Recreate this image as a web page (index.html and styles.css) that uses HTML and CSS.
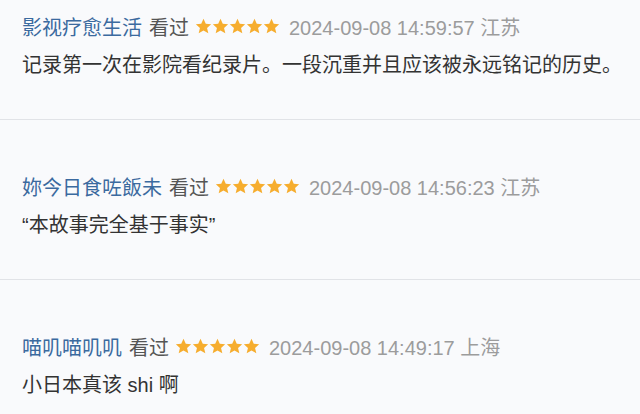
FILE: index.html
```html
<!DOCTYPE html>
<html lang="zh-CN">
<head>
    <meta charset="UTF-8">
    <meta name="viewport" content="width=device-width, initial-scale=1.0">
    <title>短评</title>
    <link rel="stylesheet" href="styles.css">
</head>
<body>

    <svg width="0" height="0" class="defs">
        <symbol id="star" viewBox="0 0 24 24">
            <path d="M12 1.2l3.2 7 7.6.7-5.8 5.1 1.8 7.6L12 17.7l-6.8 3.9 1.8-7.6-5.8-5.1 7.6-.7z" fill="#f6ad2e"/>
        </symbol>
    </svg>

    <div class="comments">
        <!-- Comment 1 -->
        <div class="comment first">
            <div class="comment-head">
                <a class="user">影视疗愈生活</a>
                <span class="status">看过</span>
                <span class="stars">
                    <svg><use href="#star"/></svg><svg><use href="#star"/></svg><svg><use href="#star"/></svg><svg><use href="#star"/></svg><svg><use href="#star"/></svg>
                </span>
                <span class="time">2024-09-08 14:59:57 江苏</span>
            </div>
            <p class="comment-body">记录第一次在影院看纪录片。一段沉重并且应该被永远铭记的历史。</p>
        </div>

        <!-- Comment 2 -->
        <div class="comment">
            <div class="comment-head">
                <a class="user">妳今日食咗飯未</a>
                <span class="status">看过</span>
                <span class="stars">
                    <svg><use href="#star"/></svg><svg><use href="#star"/></svg><svg><use href="#star"/></svg><svg><use href="#star"/></svg><svg><use href="#star"/></svg>
                </span>
                <span class="time">2024-09-08 14:56:23 江苏</span>
            </div>
            <p class="comment-body">“本故事完全基于事实”</p>
        </div>

        <!-- Comment 3 -->
        <div class="comment">
            <div class="comment-head">
                <a class="user">喵叽喵叽叽</a>
                <span class="status">看过</span>
                <span class="stars">
                    <svg><use href="#star"/></svg><svg><use href="#star"/></svg><svg><use href="#star"/></svg><svg><use href="#star"/></svg><svg><use href="#star"/></svg>
                </span>
                <span class="time">2024-09-08 14:49:17 上海</span>
            </div>
            <p class="comment-body">小日本真该 shi 啊</p>
        </div>
    </div>

</body>
</html>
```

FILE: styles.css
```css
body {
    font-family: "Liberation Sans", "Noto Sans CJK SC", sans-serif;
    background-color: #f9fafc;
    color: #333;
    margin: 0;
    padding: 0;
}
.defs {
    position: absolute;
}
.comments {
    width: 100%;
}
.comment {
    padding: 52px 10px 40px 22px;
    border-top: 1px solid #e1e3e7;
}
.comment.first {
    padding-top: 12px;
    border-top: none;
}
.comment-head {
    display: flex;
    align-items: center;
    height: 28px;
    font-size: 20px;
    white-space: nowrap;
}
.user {
    color: #3b6a9f;
    margin-right: 7px;
}
.status {
    color: #555;
    margin-right: 6px;
}
.stars {
    display: inline-flex;
    gap: 0;
    margin-right: 9px;
}
.stars svg {
    width: 17px;
    height: 17px;
}
.time {
    color: #9c9c9c;
}
.comment-body {
    margin: 11px 0 0;
    font-size: 20px;
    line-height: 28px;
    color: #333;
    white-space: nowrap;
}
```
